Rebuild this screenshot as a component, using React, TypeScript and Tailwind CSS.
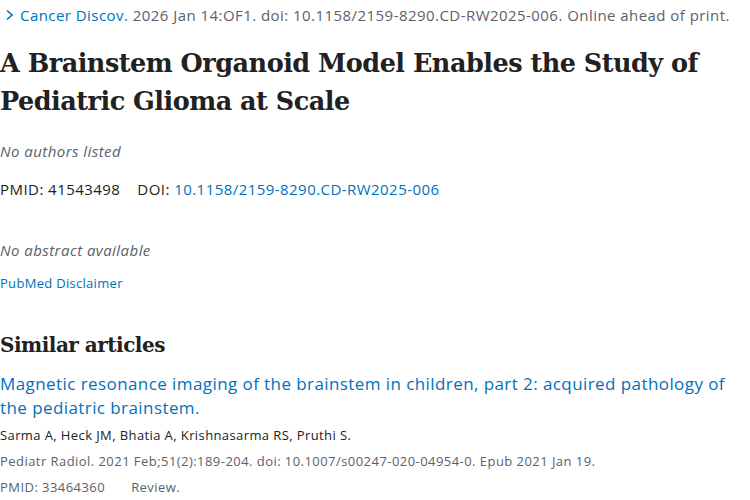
export default function App() {
  const sans = "font-['Open_Sans','Noto_Sans',sans-serif]";
  const serif = "font-['DejaVu_Serif','Liberation_Serif',serif]";
  return (
    <div className={`w-[750px] h-[500px] bg-white overflow-hidden ${sans} text-[#212121]`}>
      {/* citation line */}
      <div className="flex items-center pl-[5px] pt-[3px] text-[15px] tracking-[0.45px] leading-[24px] text-[#5b616b] whitespace-nowrap">
        <svg width="9" height="12" viewBox="0 0 9 12" className="mr-[6px]">
          <path d="M2 1.5 L7 6 L2 10.5" fill="none" stroke="#0071bc" strokeWidth="1.6" />
        </svg>
        <span className="text-[#0071bc]">Cancer Discov.</span>
        <span>&nbsp;2026 Jan 14:OF1. doi: 10.1158/2159-8290.CD-RW2025-006. Online ahead of print.</span>
      </div>

      <h1 className={`${serif} font-bold text-[25.5px] tracking-[-0.5px] leading-[38px] text-[#212121] mt-[17px]`}>
        A Brainstem Organoid Model Enables the Study of Pediatric Glioma at Scale
      </h1>

      <p className="italic text-[15px] tracking-[0.45px] text-[#5b616b] mt-[19px] leading-[24px]">No authors listed</p>

      <div className="flex text-[15px] tracking-[0.45px] leading-[24px] mt-[14px]">
        <span>PMID: 41543498</span>
        <span className="ml-[17px]">DOI:&nbsp;</span>
        <span className="text-[#0071bc]">10.1158/2159-8290.CD-RW2025-006</span>
      </div>

      <p className="italic text-[15px] tracking-[0.45px] text-[#5b616b] mt-[37px] leading-[24px]">No abstract available</p>

      <p className="text-[13px] tracking-[0.3px] text-[#0071bc] mt-[11px] leading-[20px]">PubMed Disclaimer</p>

      <h2 className={`${serif} font-bold text-[20px] tracking-[-0.5px] leading-[30px] mt-[37px]`}>Similar articles</h2>

      <div className="mt-[12px]">
        <p className="text-[17px] tracking-[0.42px] leading-[24px] text-[#0071bc]">
          Magnetic resonance imaging of the brainstem in children, part 2: acquired pathology of the pediatric brainstem.
        </p>
        <p className="text-[13px] tracking-[0.4px] leading-[26px] mt-[2px]">
          Sarma A, Heck JM, Bhatia A, Krishnasarma RS, Pruthi S.
        </p>
        <p className="text-[13px] tracking-[0.45px] leading-[26px] text-[#5b616b]">
          Pediatr Radiol. 2021 Feb;51(2):189-204. doi: 10.1007/s00247-020-04954-0. Epub 2021 Jan 19.
        </p>
        <p className="text-[13px] tracking-[0.45px] leading-[26px] text-[#5b616b] flex">
          <span>PMID: 33464360</span>
          <span className="ml-[26px]">Review.</span>
        </p>
      </div>
    </div>
  );
}
